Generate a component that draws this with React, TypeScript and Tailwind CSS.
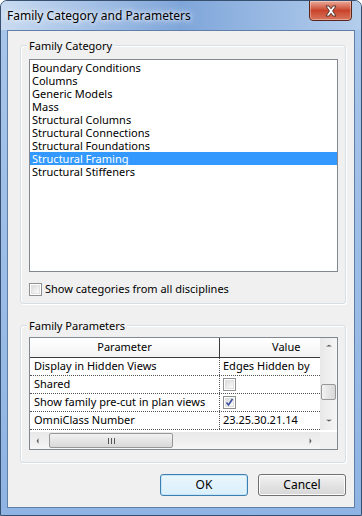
import React from "react";

const categories = [
  "Boundary Conditions",
  "Columns",
  "Generic Models",
  "Mass",
  "Structural Columns",
  "Structural Connections",
  "Structural Foundations",
  "Structural Framing",
  "Structural Stiffeners",
];

function Check({ checked }: { checked?: boolean }) {
  return (
    <span className="relative inline-block h-[13px] w-[13px] shrink-0 border border-[#8e8f8f] bg-white">
      <span className="absolute inset-[1px] border border-[#e0e0e0] bg-gradient-to-br from-[#dcdcdc] to-[#fbfbfb]" />
      {checked && (
        <svg viewBox="0 0 11 11" className="absolute inset-0 h-[11px] w-[11px]">
          <path d="M2.5 5.5 L4.5 8 L8.5 2" fill="none" stroke="#3a4fa0" strokeWidth="1.6" />
        </svg>
      )}
    </span>
  );
}

function GroupBox({ title, children, className }: { title: string; children: React.ReactNode; className?: string }) {
  return (
    <div className={"relative rounded-[3px] border border-[#d5dfe5] shadow-[inset_1px_1px_0_#fff,1px_1px_0_#fff] " + (className ?? "")}>
      <span className="absolute left-[6px] top-[-8px] bg-[#f0f0f0] px-[2px] text-[11px] leading-[15px]">{title}</span>
      {children}
    </div>
  );
}

function ArrowBtn({ dir }: { dir: "up" | "down" | "left" | "right" }) {
  const pts = {
    up: "1,4 4,1 7,4",
    down: "1,1 4,4 7,1",
    left: "4,1 1,4 4,7",
    right: "1,1 4,4 1,7",
  }[dir];
  const vert = dir === "up" || dir === "down";
  return (
    <div className="flex h-[17px] w-[17px] items-center justify-center">
      <svg viewBox="0 0 8 8" className={vert ? "h-[5px] w-[8px]" : "h-[8px] w-[5px]"} preserveAspectRatio="none">
        <polygon points={pts} fill="#5a5a5a" />
      </svg>
    </div>
  );
}

export default function App() {
  const font = { fontFamily: '"Noto Sans", "Open Sans", sans-serif' };
  return (
    <div
      style={font}
      className="flex h-[516px] w-[362px] flex-col overflow-hidden rounded-t-[7px] border border-[#37506f] bg-gradient-to-b from-[#a9c6ea] to-[#8fb4e3] text-black"
    >
      {/* title bar */}
      <div className="relative flex h-[29px] shrink-0 items-center bg-gradient-to-r from-[#c9dbf1] via-[#7fa6da] to-[#b4cdec] pl-[6px]">
        <span className="text-[12px] text-black [text-shadow:0_0_8px_#fff,0_0_4px_#fff]">Family Category and Parameters</span>
        <div className="absolute right-[9px] top-[-1px] flex h-[21px] w-[43px] items-center justify-center rounded-b-[4px] border border-[#5b2419] bg-gradient-to-b from-[#e9a99a] via-[#c8432a] to-[#d8755c] shadow-[inset_0_0_0_1px_rgba(255,255,255,0.35)]">
          <svg viewBox="0 0 14 12" className="h-[12px] w-[14px]">
            <path
              d="M2 1 L5 1 L7 3.8 L9 1 L12 1 L8.6 6 L12 11 L9 11 L7 8.2 L5 11 L2 11 L5.4 6 Z"
              fill="#fff"
              stroke="#4a2a22"
              strokeWidth="0.9"
            />
          </svg>
        </div>
      </div>

      {/* client area */}
      <div className="mx-[6px] flex h-[478px] shrink-0 flex-col border border-[#5f7ea8] bg-[#f0f0f0] pl-[12px] pr-[8px] pt-[14px]">
        <GroupBox title="Family Category" className="h-[259px] pl-[8px] pr-[7px] pt-[13px]">
          <div className="h-[213px] border border-[#828790] bg-white pt-[1px] text-[11px]">
            {categories.map((c) => (
              <div
                key={c}
                className={
                  "h-[13px] pl-[2px] leading-[13px] " + (c === "Structural Framing" ? "bg-[#3399ff] text-white" : "")
                }
              >
                {c}
              </div>
            ))}
          </div>
          <div className="mt-[9px] flex items-center gap-[3px] text-[11px]">
            <Check />
            <span>Show categories from all disciplines</span>
          </div>
        </GroupBox>

        <GroupBox title="Family Parameters" className="mt-[21px] h-[138px] pl-[8px] pr-[7px] pt-[11px]">
          <div className="flex h-[113px] flex-col border border-[#828790] bg-white text-[11px]">
            <div className="flex h-[92px]">
              <div className="flex-1 overflow-hidden">
                <div className="flex h-[20px] border-b border-[#3c3c3c] bg-gradient-to-b from-white to-[#f3f3f3]">
                  <div className="flex w-[190px] items-center justify-center border-r border-[#3c3c3c]">Parameter</div>
                  <div className="flex flex-1 items-center pl-[52px]">Value</div>
                </div>
                {[
                  ["Display in Hidden Views", "Edges Hidden by"],
                  ["Shared", "box"],
                  ["Show family pre-cut in plan views", "checked"],
                  ["OmniClass Number", "23.25.30.21.14"],
                ].map(([p, v]) => (
                  <div key={p} className="flex h-[18px] border-b border-dotted border-[#555]">
                    <div className="flex w-[190px] items-center overflow-hidden whitespace-nowrap border-r border-dotted border-[#555] pl-[4px]">
                      {p}
                    </div>
                    <div className="flex flex-1 items-center overflow-hidden whitespace-nowrap pl-[3px]">
                      {v === "box" ? <Check /> : v === "checked" ? <Check checked /> : v}
                    </div>
                  </div>
                ))}
              </div>
              <div className="flex w-[17px] flex-col bg-gradient-to-r from-[#e8e8e8] to-[#f5f5f5]">
                <ArrowBtn dir="up" />
                <div className="relative flex-1">
                  <div className="absolute left-[1px] top-[29px] h-[16px] w-[15px] rounded-[2px] border border-[#979797] bg-gradient-to-r from-[#f2f2f2] to-[#d8d8d8]" />
                </div>
                <ArrowBtn dir="down" />
              </div>
            </div>
            <div className="mt-[2px] flex h-[17px]">
              <div className="flex flex-1 bg-gradient-to-b from-[#e8e8e8] to-[#f5f5f5]">
                <ArrowBtn dir="left" />
                <div className="relative flex-1">
                  <div className="absolute left-[2px] top-[1px] flex h-[15px] w-[124px] items-center justify-center rounded-[2px] border border-[#979797] bg-gradient-to-b from-[#f2f2f2] to-[#d8d8d8]">
                    <span className="flex gap-[2px]">
                      <span className="h-[6px] w-[1px] bg-[#555]" />
                      <span className="h-[6px] w-[1px] bg-[#555]" />
                      <span className="h-[6px] w-[1px] bg-[#555]" />
                    </span>
                  </div>
                </div>
                <ArrowBtn dir="right" />
              </div>
              <div className="w-[17px] bg-[#f0f0f0]" />
            </div>
          </div>
        </GroupBox>

        <div className="mt-[11px] flex justify-end gap-[10px] pr-[0px] text-[12px]">
          <button className="h-[22px] w-[88px] rounded-[3px] border border-[#3c7fb1] bg-gradient-to-b from-[#eaf6fd] to-[#d9f0fc] shadow-[inset_0_0_0_1px_#c6e6f8]">
            OK
          </button>
          <button className="h-[22px] w-[88px] rounded-[3px] border border-[#707070] bg-gradient-to-b from-[#f2f2f2] to-[#d6d6d6] shadow-[inset_0_0_0_1px_#fcfcfc]">
            Cancel
          </button>
        </div>
      </div>
      <div className="flex-1" />
    </div>
  );
}
